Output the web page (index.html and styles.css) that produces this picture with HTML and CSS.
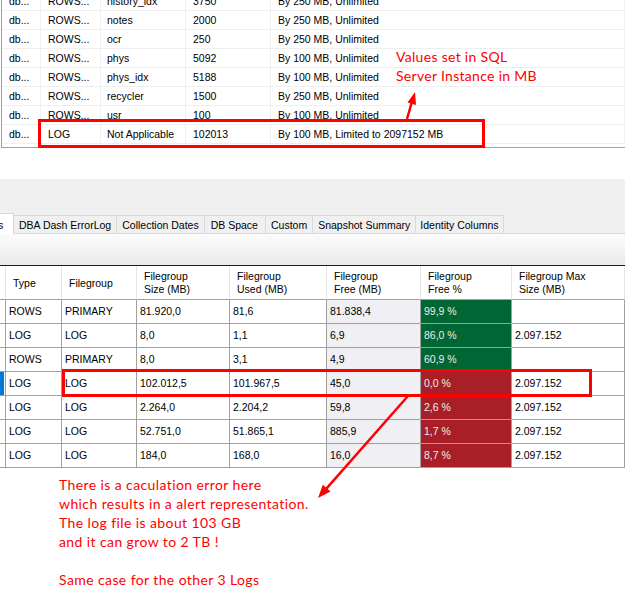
FILE: index.html
```html
<!DOCTYPE html>
<html>
<head>
<meta charset="utf-8">
<link rel="stylesheet" href="styles.css">
</head>
<body>
<div class="page">
  <div class="top-grid">
    <div class="tg-rows">
      <div class="tg-row"><span>db...</span><span>ROWS...</span><span>history_idx</span><span>3750</span><span>By 250 MB, Unlimited</span></div>
      <div class="tg-row"><span>db...</span><span>ROWS...</span><span>notes</span><span>2000</span><span>By 250 MB, Unlimited</span></div>
      <div class="tg-row"><span>db...</span><span>ROWS...</span><span>ocr</span><span>250</span><span>By 250 MB, Unlimited</span></div>
      <div class="tg-row"><span>db...</span><span>ROWS...</span><span>phys</span><span>5092</span><span>By 100 MB, Unlimited</span></div>
      <div class="tg-row"><span>db...</span><span>ROWS...</span><span>phys_idx</span><span>5188</span><span>By 100 MB, Unlimited</span></div>
      <div class="tg-row"><span>db...</span><span>ROWS...</span><span>recycler</span><span>1500</span><span>By 250 MB, Unlimited</span></div>
      <div class="tg-row"><span>db...</span><span>ROWS...</span><span>usr</span><span>100</span><span>By 100 MB, Unlimited</span></div>
      <div class="tg-row"><span>db...</span><span>LOG</span><span>Not Applicable</span><span>102013</span><span>By 100 MB, Limited to 2097152 MB</span></div>
    </div>
  </div>

  <div class="gap"></div>

  <div class="tab-area">
    <div class="tab sel"><span class="cut">s</span></div>
    <div class="tab">DBA Dash ErrorLog</div>
    <div class="tab">Collection Dates</div>
    <div class="tab wide">DB Space</div>
    <div class="tab">Custom</div>
    <div class="tab">Snapshot Summary</div>
    <div class="tab narrow">Identity Columns</div>
  </div>
  <div class="toolbar"></div>

  <div class="grid">
    <div class="g-head">
      <div class="h"></div>
      <div class="h">Type</div>
      <div class="h">Filegroup</div>
      <div class="h">Filegroup<br>Size (MB)</div>
      <div class="h">Filegroup<br>Used (MB)</div>
      <div class="h">Filegroup<br>Free (MB)</div>
      <div class="h">Filegroup<br>Free %</div>
      <div class="h">Filegroup Max<br>Size (MB)</div>
    </div>
    <div class="g-row"><div class="rh"></div><div>ROWS</div><div>PRIMARY</div><div>81.920,0</div><div>81,6</div><div class="free">81.838,4</div><div class="pct ok">99,9 %</div><div></div></div>
    <div class="g-row"><div class="rh"></div><div>LOG</div><div>LOG</div><div>8,0</div><div>1,1</div><div class="free">6,9</div><div class="pct ok">86,0 %</div><div>2.097.152</div></div>
    <div class="g-row"><div class="rh"></div><div>ROWS</div><div>PRIMARY</div><div>8,0</div><div>3,1</div><div class="free">4,9</div><div class="pct ok">60,9 %</div><div></div></div>
    <div class="g-row"><div class="rh cur"></div><div>LOG</div><div>LOG</div><div>102.012,5</div><div>101.967,5</div><div class="free">45,0</div><div class="pct bad">0,0 %</div><div>2.097.152</div></div>
    <div class="g-row"><div class="rh"></div><div>LOG</div><div>LOG</div><div>2.264,0</div><div>2.204,2</div><div class="free">59,8</div><div class="pct bad">2,6 %</div><div>2.097.152</div></div>
    <div class="g-row"><div class="rh"></div><div>LOG</div><div>LOG</div><div>52.751,0</div><div>51.865,1</div><div class="free">885,9</div><div class="pct bad">1,7 %</div><div>2.097.152</div></div>
    <div class="g-row"><div class="rh"></div><div>LOG</div><div>LOG</div><div>184,0</div><div>168,0</div><div class="free">16,0</div><div class="pct bad">8,7 %</div><div>2.097.152</div></div>
  </div>

  <div class="note">
    There is a caculation error here<br>
    which results in a alert representation.<br>
    The log file is about 103 GB<br>
    and it can grow to 2 TB !<br>
    <br>
    Same case for the other 3 Logs
  </div>

  <div class="note-top">Values set in SQL<br>Server Instance in MB</div>
  <div class="box box-top"></div>
  <div class="box box-bottom"></div>

  <svg class="arrows" width="625" height="606" viewBox="0 0 625 606">
    <line x1="407" y1="119" x2="411.6" y2="103" stroke="#f00" stroke-width="2.5"/>
    <polygon points="415,92 416,105 407.5,102.5" fill="#f00"/>
    <line x1="408" y1="396" x2="326.6" y2="488.3" stroke="#f00" stroke-width="2.5"/>
    <polygon points="318,498 330.5,491.5 322.8,484.8" fill="#f00"/>
  </svg>
</div>
</body>
</html>
```

FILE: styles.css
```css
* { box-sizing: border-box; }
html, body { margin: 0; padding: 0; background: #fff; }
body {
  font-family: "Liberation Sans", Arial, sans-serif;
  font-size: 10.5px;
  color: #000;
}
.page {
  position: relative;
  width: 625px;
  height: 606px;
  overflow: hidden;
}

/* top grid */
.top-grid {
  height: 148px;
  margin-left: 1px;
  border-left: 1px solid #a0a0a0;
  border-bottom: 1px solid #a0a0a0;
  overflow: hidden;
}
.tg-rows { margin-top: -8px; }
.tg-row {
  display: grid;
  grid-template-columns: 39px 60px 85px 85px 1fr;
  height: 19px;
}
.tg-row > span {
  border-right: 1px solid #efefef;
  border-bottom: 1px solid #efefef;
  padding-left: 7px;
  line-height: 18px;
  white-space: nowrap;
  overflow: hidden;
}
.tg-row > span:nth-child(3) { padding-left: 6px; }

.gap { height: 31px; }

/* tabs */
.tab-area {
  height: 55px;
  background: #f0f0f0;
  border-bottom: 1px solid #dadada;
  display: flex;
  align-items: flex-end;
}
.tab {
  height: 18px;
  border: 1px solid #d9d9d9;
  border-bottom: none;
  margin-left: -1px;
  padding: 0 5px;
  line-height: 18px;
  white-space: nowrap;
  background: #f0f0f0;
}
.tab.wide { padding: 0 7px 0 6px; }
.tab.narrow { padding: 0 4px 0 4px; }
.tab.sel {
  height: 21px;
  width: 14px;
  margin-left: 0;
  margin-bottom: -1px;
  background: #fff;
  border-left: none;
  padding: 0;
  line-height: 22px;
  overflow: hidden;
  position: relative;
  z-index: 1;
}
.tab .cut { margin-left: -2px; }

.toolbar {
  height: 31px;
  background: linear-gradient(#fbfbfb, #f4f4f4 50%, #e9e9e9);
}

/* bottom grid */
.grid { border-top: 1px solid #1e1e1e; }
.g-head, .g-row {
  display: grid;
  grid-template-columns: 6px 56px 75px 93px 97px 94px 91px 1fr;
}
.g-head { height: 34px; }
.g-head .h {
  border-right: 1px solid #e4e4e4;
  border-bottom: 1px solid #a0a0a0;
  padding-left: 7px;
  padding-top: 1px;
  line-height: 13px;
  display: flex;
  align-items: center;
  white-space: nowrap;
}
.g-head .h:first-child { padding: 0; }
.g-row { height: 24px; }
.g-row > div {
  border-right: 1px solid #a0a0a0;
  border-bottom: 1px solid #a0a0a0;
  padding-left: 3px;
  line-height: 23px;
  white-space: nowrap;
}
.g-row > .rh { padding: 0; }
.g-row > .rh.cur { box-shadow: inset 4px 0 0 #0078d7; }
.g-row > .free { background: #efeff4; }
.g-row > .pct { color: #ececec; }
.g-row > .ok { background: #006633; }
.g-row > .bad { background: #a81f27; }

/* notes */
.note {
  margin: 7px 0 0 59px;
  font-family: Lato, "Liberation Sans", sans-serif;
  font-size: 14px;
  letter-spacing: 0.4px;
  line-height: 19px;
  color: #f00;
}
.note-top {
  position: absolute;
  left: 396px;
  top: 47px;
  font-family: Lato, "Liberation Sans", sans-serif;
  font-size: 14px;
  letter-spacing: 0.3px;
  line-height: 19px;
  color: #f00;
  white-space: nowrap;
}
.box {
  position: absolute;
  border: 3px solid #f00;
}
.box-top { left: 38px; top: 119px; width: 447px; height: 29px; }
.box-bottom { left: 62px; top: 369px; width: 530px; height: 28px; }
.arrows {
  position: absolute;
  left: 0;
  top: 0;
  pointer-events: none;
}
```
